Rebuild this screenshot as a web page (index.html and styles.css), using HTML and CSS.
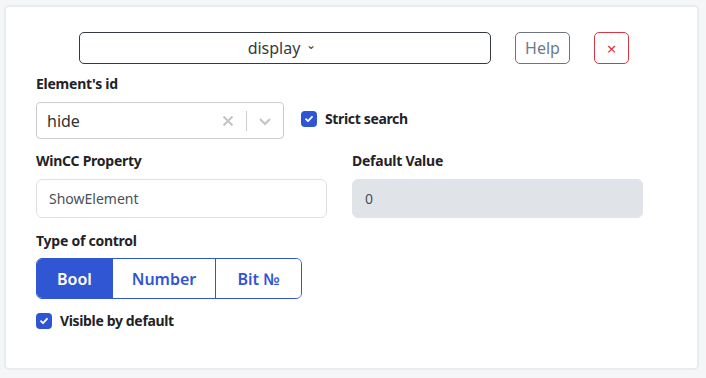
FILE: index.html
```html
<!DOCTYPE html>
<html lang="en">
<head>
  <meta charset="UTF-8">
  <meta name="viewport" content="width=device-width, initial-scale=1.0">
  <title>Element editor</title>
  <link rel="stylesheet" href="styles.css">
</head>
<body>

  <div class="card">
    <div class="toolbar">
      <button class="picker">display <span class="caret">&#8964;</span></button>
      <button class="btn-help">Help</button>
      <button class="btn-close">&times;</button>
    </div>

    <label class="field-label">Element's id</label>
    <div class="id-row">
      <div class="select">
        <span class="select-value">hide</span>
        <span class="select-icons">
          <svg width="20" height="20" viewBox="0 0 20 20"><path d="M5.5 5.5l9 9M14.5 5.5l-9 9" stroke="#c4c4c4" stroke-width="2" fill="none"/></svg>
          <span class="sep"></span>
          <svg width="20" height="20" viewBox="0 0 20 20"><path d="M5 8l5 5 5-5" stroke="#c4c4c4" stroke-width="2" fill="none"/></svg>
        </span>
      </div>
      <label class="check strict"><span class="box"><svg width="10" height="10" viewBox="0 0 10 10"><path d="M2 5.2l2 2 4-4.4" stroke="#fff" stroke-width="1.8" fill="none" stroke-linecap="round" stroke-linejoin="round"/></svg></span>Strict search</label>
    </div>

    <div class="cols">
      <div>
        <label class="field-label">WinCC Property</label>
        <div class="input">ShowElement</div>
      </div>
      <div>
        <label class="field-label">Default Value</label>
        <div class="input disabled">0</div>
      </div>
    </div>

    <label class="field-label">Type of control</label>
    <div class="btn-group">
      <button class="active">Bool</button>
      <button>Number</button>
      <button>Bit &#8470;</button>
    </div>

    <label class="check visible"><span class="box"><svg width="10" height="10" viewBox="0 0 10 10"><path d="M2 5.2l2 2 4-4.4" stroke="#fff" stroke-width="1.8" fill="none" stroke-linecap="round" stroke-linejoin="round"/></svg></span>Visible by default</label>
  </div>

</body>
</html>
```

FILE: styles.css
```css
* { margin: 0; padding: 0; box-sizing: border-box; font-family: 'Noto Sans', sans-serif; }
body { background: #f5f6f8; color: #212529; padding: 5px 7px 0 4px; }
button { font-family: inherit; background: #fff; cursor: pointer; }

.card {
  background: #fff; border: 2px solid #e9ecef; border-radius: 5px;
  height: 365px; padding: 25px 30px 0 30px;
}

.toolbar { display: flex; align-items: center; gap: 24px; padding-left: 43px; }
.picker {
  width: 412px; height: 32px; border: 1px solid #343a40; border-radius: 5px;
  font-size: 16px; color: #343a40; display: flex; align-items: center; justify-content: center; gap: 6px;
  padding-right: 6px;
}
.caret { font-size: 12px; line-height: 1; position: relative; top: -3px; }
.btn-help {
  width: 55px; height: 32px; border: 1px solid #6c757d; border-radius: 5px;
  font-size: 16px; color: #6b7a8c;
}
.btn-close {
  width: 35px; height: 32px; border: 1px solid #dc3545; border-radius: 5px;
  font-size: 17px; color: #dc3545; line-height: 1;
}

.field-label { display: block; font-size: 14px; font-weight: 700; color: #1f2328; line-height: 21px; letter-spacing: -0.25px; }
.toolbar + .field-label { margin-top: 9px; }

.id-row { display: flex; align-items: center; gap: 17px; margin-top: 8px; }
.select {
  width: 248px; height: 37px; border: 1px solid #cccccc; border-radius: 4px;
  display: flex; align-items: center; justify-content: space-between; padding: 0 8px 0 10px;
  font-size: 16px; color: #333;
}
.select-icons { display: flex; align-items: center; gap: 4px; }
.sep { width: 1px; height: 20px; background: #cccccc; margin: 0 4px; }

.check { display: flex; align-items: center; gap: 8px; font-size: 14px; font-weight: 700; color: #1f2328; letter-spacing: -0.35px; }
.check.strict { margin-top: -4px; }
.box {
  width: 16px; height: 16px; border-radius: 4px; background: #2f55d4;
  display: flex; align-items: center; justify-content: center;
}

.cols { display: grid; grid-template-columns: 291px 291px; gap: 25px; margin-top: 11px; }
.input {
  height: 39px; margin-top: 8px; border: 1px solid #dee2e6; border-radius: 6px;
  font-size: 14px; color: #495057; padding: 0 12px; display: flex; align-items: center;
}
.input.disabled { background: #e0e3e7; border-color: #e0e3e7; }

.cols + .field-label { margin-top: 12px; }
.btn-group { display: inline-flex; margin-top: 7px; border: 1px solid #3056d3; border-radius: 6px; overflow: hidden; }
.btn-group button {
  height: 39px; border: none; border-left: 1px solid #3056d3;
  font-size: 16px; font-weight: 600; color: #3056d3; padding: 0 10px;
}
.btn-group button:first-child { border-left: none; }
.btn-group .active { background: #3056d3; color: #fff; width: 75px; }
.btn-group button:nth-child(2) { width: 103px; }
.btn-group button:nth-child(3) { width: 86px; }

.check.visible { margin-top: 12px; }
```
